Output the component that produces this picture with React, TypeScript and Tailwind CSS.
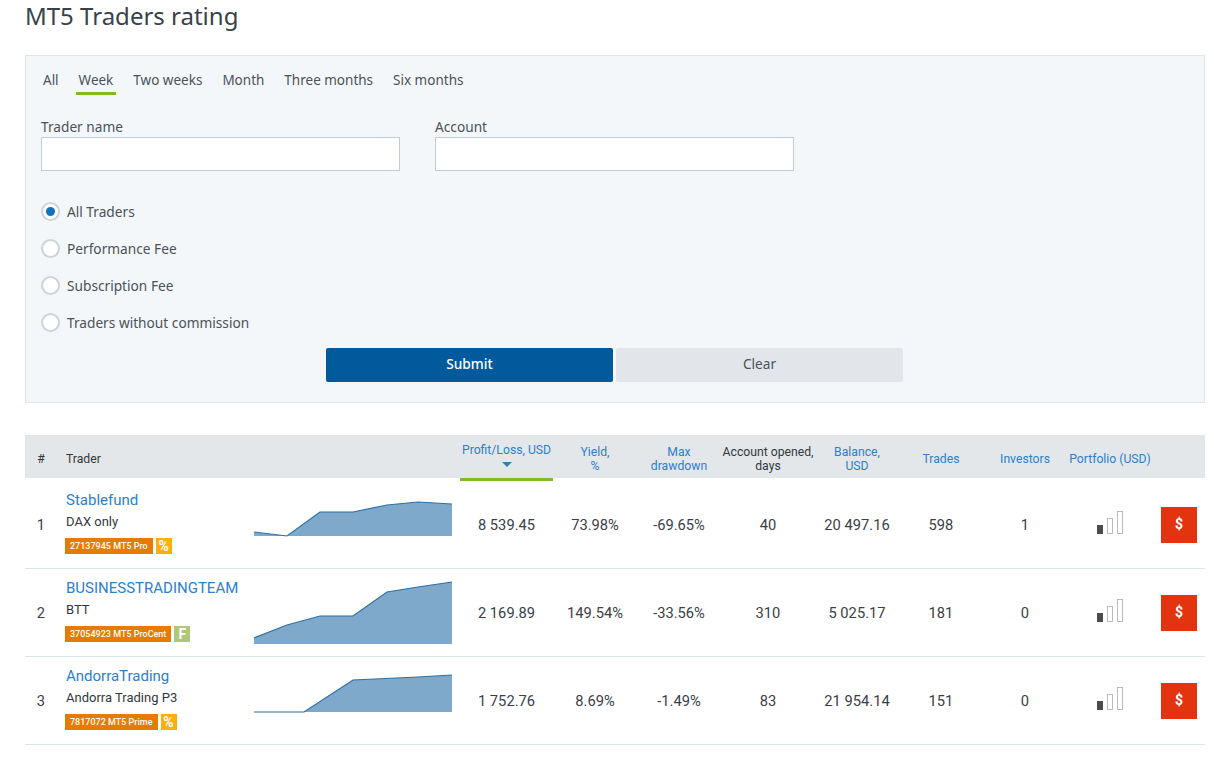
const rowGrid = 'grid grid-cols-[32px_197px_206px_93px_84px_84px_94px_84px_84px_84px_86px_52px]';

const tabs = ['All', 'Week', 'Two weeks', 'Month', 'Three months', 'Six months'];
const radios = ['All Traders', 'Performance Fee', 'Subscription Fee', 'Traders without commission'];

interface Trader {
  rank: number;
  name: string;
  sub: string;
  account: string;
  badge: string;
  viewBox: string;
  line: string;
  base: number;
  profit: string;
  yieldPct: string;
  drawdown: string;
  days: string;
  balance: string;
  trades: string;
  investors: string;
  rowClass: string;
}

const traders: Trader[] = [
  {
    rank: 1,
    name: 'Stablefund',
    sub: 'DAX only',
    account: '27137945 MT5 Pro',
    badge: '%',
    viewBox: '254 493 198 64',
    line: '254,532 287,536 320,512 353,512 387,505 418,502 452,504',
    base: 536,
    profit: '8 539.45',
    yieldPct: '73.98%',
    drawdown: '-69.65%',
    days: '40',
    balance: '20 497.16',
    trades: '598',
    investors: '1',
    rowClass: 'h-[91px] pt-[3px]',
  },
  {
    rank: 2,
    name: 'BUSINESSTRADINGTEAM',
    sub: 'BTT',
    account: '37054923 MT5 ProCent',
    badge: 'F',
    viewBox: '254 581 198 64',
    line: '254,638 287,625 320,616 353,616 387,592 418,587 452,582',
    base: 644,
    profit: '2 169.89',
    yieldPct: '149.54%',
    drawdown: '-33.56%',
    days: '310',
    balance: '5 025.17',
    trades: '181',
    investors: '0',
    rowClass: 'h-[88px]',
  },
  {
    rank: 3,
    name: 'AndorraTrading',
    sub: 'Andorra Trading P3',
    account: '7817072 MT5 Prime',
    badge: '%',
    viewBox: '254 669 198 64',
    line: '254,712 304,712 353,680 418,677 452,675',
    base: 712,
    profit: '1 752.76',
    yieldPct: '8.69%',
    drawdown: '-1.49%',
    days: '83',
    balance: '21 954.14',
    trades: '151',
    investors: '0',
    rowClass: 'h-[88px]',
  },
];

function Sparkline({ viewBox, line, base }: { viewBox: string; line: string; base: number }) {
  return (
    <svg viewBox={viewBox} width="198" height="64" className="block">
      <polygon points={`254,${base} ${line} 452,${base}`} fill="#7fa9cb" />
      <polyline points={line} fill="none" stroke="#2b6fa6" strokeWidth="1.2" />
    </svg>
  );
}

function PortfolioBars() {
  return (
    <div className="flex items-end justify-center gap-1 h-[23px] mb-1">
      <div className="w-[6px] h-[9px] bg-[#474c50]" />
      <div className="w-[6px] h-[16px] border border-[#bbbbbb]" />
      <div className="w-[6px] h-[23px] border border-[#bbbbbb]" />
    </div>
  );
}

function TraderRow({ t }: { t: Trader }) {
  const cell = 'flex items-center justify-center pt-[2px] text-[14.7px] text-[#3a4046]';
  return (
    <div className={`${rowGrid} ${t.rowClass} border-b border-[#dce6e8]`}>
      <div className={cell}>{t.rank}</div>
      <div className="flex flex-col justify-center pl-[9px] pb-1 -mt-[1px]">
        <a className="text-[15px] leading-[20px] text-[#2a7fd0]">{t.name}</a>
        <div className="text-[13px] leading-[20px] mt-[2px] text-[#33383c]">{t.sub}</div>
        <div className="flex gap-[3px] mt-[6px] -ml-[1px]">
          <span className="h-4 px-[5px] bg-[#e87a00] text-white text-[9px] leading-4 font-medium">{t.account}</span>
          <span
            className={`w-4 h-4 text-white text-[14px] leading-4 font-bold text-center ${t.badge === 'F' ? 'bg-[#afc878]' : 'bg-[#ffae0d]'}`}
          >
            {t.badge}
          </span>
        </div>
      </div>
      <div className="flex items-center">
        <Sparkline viewBox={t.viewBox} line={t.line} base={t.base} />
      </div>
      <div className={cell}>{t.profit}</div>
      <div className={cell}>{t.yieldPct}</div>
      <div className={cell}>{t.drawdown}</div>
      <div className={cell}>{t.days}</div>
      <div className={cell}>{t.balance}</div>
      <div className={cell}>{t.trades}</div>
      <div className={cell}>{t.investors}</div>
      <div className="flex items-center justify-center">
        <PortfolioBars />
      </div>
      <div className="flex items-center pl-2">
        <button className="w-9 h-9 bg-[#e1340f] text-white text-[14px] font-bold">$</button>
      </div>
    </div>
  );
}

export default function App() {
  const th = 'flex items-center justify-center pt-[2px] text-center text-[12.2px] leading-[14px] text-[#2a7fd0]';
  return (
    <div className="min-h-[759px] bg-white pl-[25px] pr-[9px] font-['Roboto',sans-serif]">
      <h1 className="h-[55px] pb-[23px] flex items-center text-[24px] font-normal text-[#37424b] font-['Noto_Sans',sans-serif]">
        MT5 Traders rating
      </h1>

      <form className="h-[348px] bg-[#f4f7fa] border border-[#dfe5e8] px-[15px] font-['Noto_Sans',sans-serif] text-[13.7px] text-[#4b5258]">
        <div className="flex gap-[14px] h-10 pt-[13px] -ml-[1px] text-[13.5px]">
          {tabs.map((tab) => (
            <div
              key={tab}
              className={`h-[26px] px-[3px] leading-[22px] ${tab === 'Week' ? 'border-b-[3px] border-[#7fbb26]' : ''}`}
            >
              {tab}
            </div>
          ))}
        </div>
        <div className="flex gap-[35px] mt-[21px]">
          {['Trader name', 'Account'].map((label) => (
            <label key={label} className="block w-[359px]">
              <span className="block h-[20px] leading-[20px]">{label}</span>
              <input className="block w-full h-[34px] bg-white border border-[#c4ccd3]" />
            </label>
          ))}
        </div>
        <div className="flex flex-col gap-[18px] mt-[31px]">
          {radios.map((radio, i) => (
            <div key={radio} className="flex items-center gap-[7px] h-[19px]">
              <span className="flex items-center justify-center w-[19px] h-[19px] rounded-full bg-white border-2 border-[#cdd3dc]">
                {i === 0 && <span className="w-[9px] h-[9px] rounded-full bg-[#0f72bd]" />}
              </span>
              <span className="pt-[2px]">{radio}</span>
            </div>
          ))}
        </div>
        <div className="flex gap-[3px] mt-[16px] ml-[285px]">
          <button type="button" className="w-[287px] h-[34px] pb-[1px] rounded-[2px] bg-[#005a9c] text-white font-medium">
            Submit
          </button>
          <button type="button" className="w-[287px] h-[34px] pb-[1px] rounded-[2px] bg-[#e2e6ea] text-[#4b5258]">
            Clear
          </button>
        </div>
      </form>

      <div className="mt-8">
        <div className={`${rowGrid} h-[43px] bg-[#e4e7ea]`}>
          <div className="flex items-center justify-center pt-[2px] text-[12.2px] text-[#33383c]">#</div>
          <div className="flex items-center pt-[2px] pl-[9px] text-[12.2px] text-[#33383c] col-span-2">Trader</div>
          <div className="relative h-[46px] pt-[2px] pb-[3px] border-b-[3px] border-[#7fbb26] flex flex-col items-center justify-center text-[12.2px] leading-[14px] text-[#2a7fd0]">
            Profit/Loss, USD
            <svg width="10" height="5" viewBox="0 0 10 5" className="mt-[5px] mb-[2px]">
              <polygon points="0,0 10,0 5,5" fill="#2f7fb5" />
            </svg>
          </div>
          <div className={th}>
            Yield,
            <br />%
          </div>
          <div className={th}>
            Max
            <br />
            drawdown
          </div>
          <div className={`${th} text-[#33383c]`}>
            Account opened,
            <br />
            days
          </div>
          <div className={th}>
            Balance,
            <br />
            USD
          </div>
          <div className={th}>Trades</div>
          <div className={th}>Investors</div>
          <div className={th}>Portfolio (USD)</div>
          <div />
        </div>
        {traders.map((t) => (
          <TraderRow key={t.rank} t={t} />
        ))}
      </div>
    </div>
  );
}
